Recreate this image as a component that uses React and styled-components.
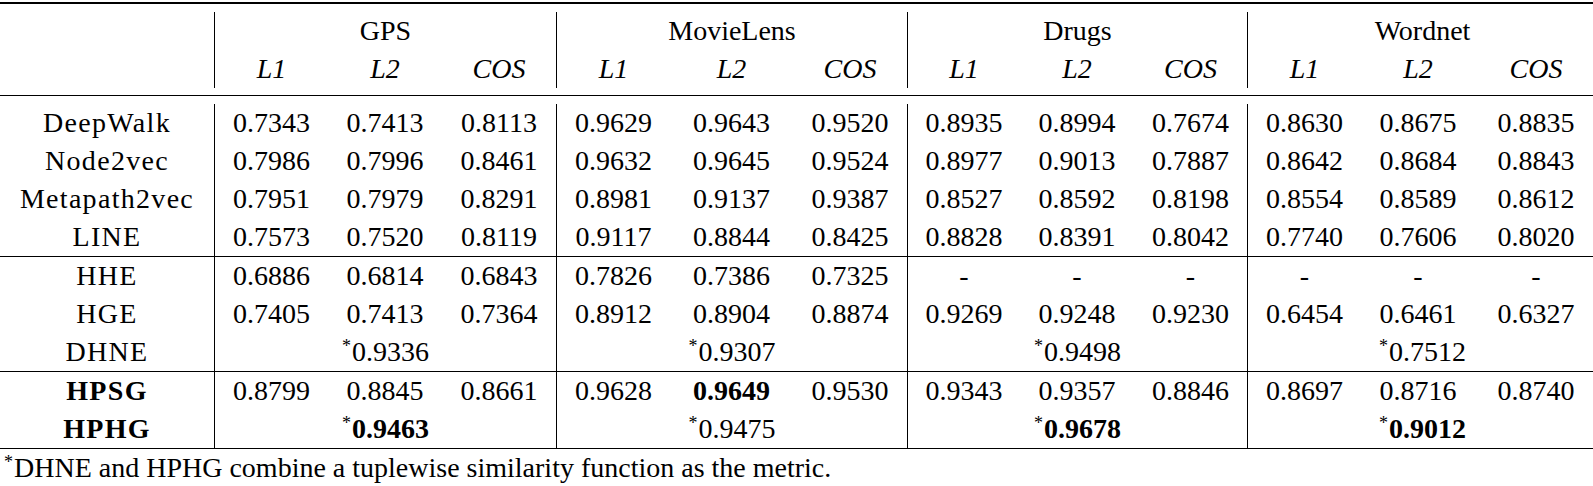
import React from "react";
import styled, { createGlobalStyle } from "styled-components";

const Global = createGlobalStyle`
  html, body { margin: 0; padding: 0; background: #fff; overflow: hidden; }
  body { font-family: "Liberation Serif", "DejaVu Serif", "Times New Roman", serif; color: #000; }
`;

const COLS =
  "214px 114px 114px 114px 114px 123px 114px 113px 114px 113px 114px 114px 122px";

const Page = styled.div`
  padding-top: 2px;
  width: 1597px;
  font-family: "Liberation Serif", "DejaVu Serif", serif;
  font-size: 28px;
`;

const TopRule = styled.div`
  border-top: 2px solid #000;
`;

const MidRule = styled.div`
  border-top: 1px solid #000;
`;

const Gap = styled.div`
  height: ${(p) => p.$h}px;
`;

const Row = styled.div`
  display: grid;
  grid-template-columns: ${COLS};
  height: 38px;
  line-height: 38px;
`;

const Cell = styled.div`
  grid-column: span ${(p) => p.$span || 1};
  text-align: center;
  white-space: nowrap;
  border-left: ${(p) => (p.$divider ? "1px solid #000" : "0")};
  font-weight: ${(p) => (p.$bold ? 700 : 400)};
`;

const Label = styled(Cell)`
  letter-spacing: 1.3px;
`;

const Metric = styled(Cell)`
  font-style: italic;
`;

const Star = styled.span`
  font-size: 18px;
  font-weight: 400;
  vertical-align: 9px;
  line-height: 0;
  margin-right: 1px;
`;

const Footnote = styled.div`
  padding-left: 4px;
  line-height: 38px;
  white-space: nowrap;
`;

const datasets = ["GPS", "MovieLens", "Drugs", "Wordnet"];
const metrics = ["L1", "L2", "COS"];

const group1 = [
  ["DeepWalk", "0.7343 0.7413 0.8113 0.9629 0.9643 0.9520 0.8935 0.8994 0.7674 0.8630 0.8675 0.8835"],
  ["Node2vec", "0.7986 0.7996 0.8461 0.9632 0.9645 0.9524 0.8977 0.9013 0.7887 0.8642 0.8684 0.8843"],
  ["Metapath2vec", "0.7951 0.7979 0.8291 0.8981 0.9137 0.9387 0.8527 0.8592 0.8198 0.8554 0.8589 0.8612"],
  ["LINE", "0.7573 0.7520 0.8119 0.9117 0.8844 0.8425 0.8828 0.8391 0.8042 0.7740 0.7606 0.8020"],
];

const group2 = [
  ["HHE", "0.6886 0.6814 0.6843 0.7826 0.7386 0.7325 - - - - - -"],
  ["HGE", "0.7405 0.7413 0.7364 0.8912 0.8904 0.8874 0.9269 0.9248 0.9230 0.6454 0.6461 0.6327"],
];

const hpsg = "0.8799 0.8845 0.8661 0.9628 0.9649 0.9530 0.9343 0.9357 0.8846 0.8697 0.8716 0.8740";

function ValueRow({ label, values, bold, boldIdx = [] }) {
  const vals = values.split(" ");
  return (
    <Row>
      <Label $bold={bold}>{label}</Label>
      {vals.map((v, i) => (
        <Cell key={i} $divider={i % 3 === 0} $bold={boldIdx.includes(i)}>
          {v}
        </Cell>
      ))}
    </Row>
  );
}

function SpanRow({ label, bold, values }) {
  return (
    <Row>
      <Label $bold={bold}>{label}</Label>
      {values.map(([v, b], i) => (
        <Cell key={i} $span={3} $divider $bold={b}>
          <Star>*</Star>
          {v}
        </Cell>
      ))}
    </Row>
  );
}

export default function App() {
  return (
    <>
      <Global />
      <Page>
        <TopRule />
        <Gap $h={8} />
        <Row>
          <Cell />
          {datasets.map((d) => (
            <Cell key={d} $span={3} $divider>
              {d}
            </Cell>
          ))}
        </Row>
        <Row>
          <Cell />
          {datasets.flatMap((d) =>
            metrics.map((m, i) => (
              <Metric key={d + m} $divider={i === 0}>
                {m}
              </Metric>
            ))
          )}
        </Row>
        <Gap $h={7} />
        <MidRule />
        <Gap $h={8} />
        {group1.map(([l, v]) => (
          <ValueRow key={l} label={l} values={v} />
        ))}
        <MidRule />
        {group2.map(([l, v]) => (
          <ValueRow key={l} label={l} values={v} />
        ))}
        <SpanRow
          label="DHNE"
          values={[["0.9336"], ["0.9307"], ["0.9498"], ["0.7512"]]}
        />
        <MidRule />
        <ValueRow label="HPSG" bold values={hpsg} boldIdx={[4]} />
        <SpanRow
          label="HPHG"
          bold
          values={[["0.9463", true], ["0.9475"], ["0.9678", true], ["0.9012", true]]}
        />
        <MidRule />
        <Footnote>
          <Star>*</Star>DHNE and HPHG combine a tuplewise similarity function as the metric.
        </Footnote>
      </Page>
    </>
  );
}
